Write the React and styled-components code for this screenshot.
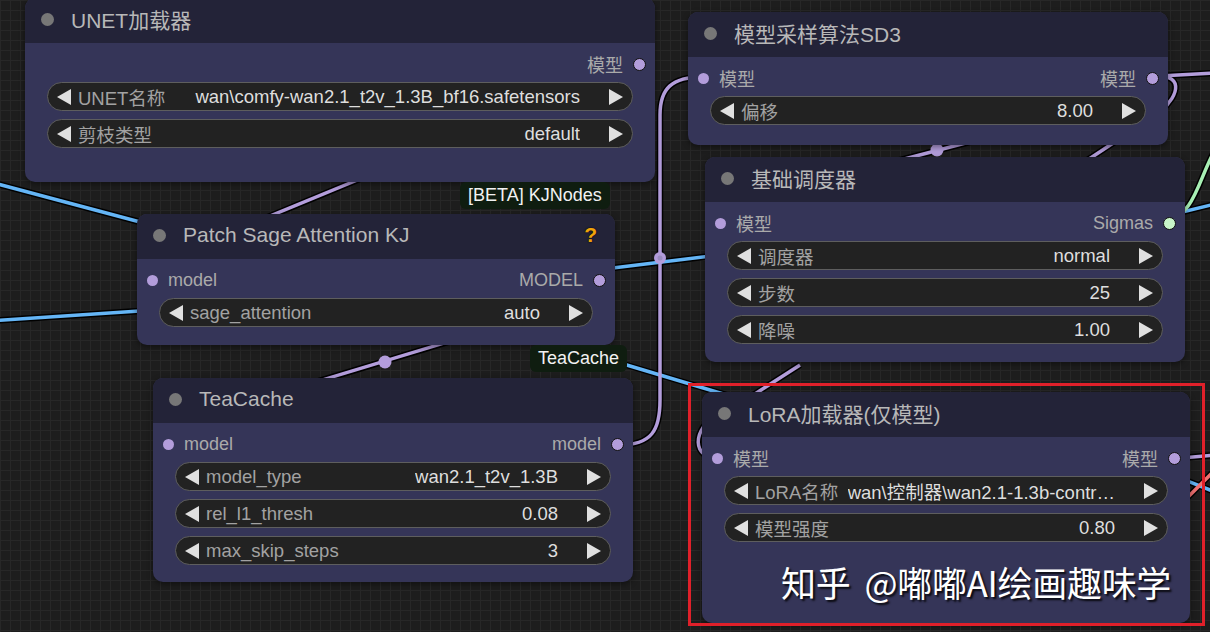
import styled, { createGlobalStyle } from 'styled-components';

const GlobalStyle = createGlobalStyle`
  html, body {
    margin: 0;
    padding: 0;
    background: #1d1d1d;
  }
  * {
    box-sizing: border-box;
  }
`;

const FONT = `"Liberation Sans", Arial, "Noto Sans CJK SC", sans-serif`;

const Canvas = styled.div`
  position: relative;
  width: 1210px;
  height: 632px;
  overflow: hidden;
  font-family: ${FONT};
  background-color: #1d1d1d;
  background-image:
    linear-gradient(#272727 1px, transparent 1px),
    linear-gradient(90deg, #272727 1px, transparent 1px);
  background-size: 10px 10px;
`;

const WireLayer = styled.svg`
  position: absolute;
  inset: 0;
  width: 1210px;
  height: 632px;
`;

const NodeBox = styled.div`
  position: absolute;
  left: ${p => p.$x}px;
  top: ${p => p.$y}px;
  width: ${p => p.$w}px;
  height: ${p => p.$h}px;
  display: flex;
  flex-direction: column;
  border-radius: 10px;
  background: #353558;
  box-shadow: 0 2px 6px rgba(0, 0, 0, 0.45);
`;

const Header = styled.div`
  height: 45px;
  flex: none;
  display: flex;
  align-items: center;
  padding: 0 18px 3px 16px;
  background: #232338;
  border-radius: 10px 10px 0 0;
`;

const TitleDot = styled.span`
  width: 13px;
  height: 13px;
  border-radius: 50%;
  background: #777;
  margin-right: 17px;
  flex: none;
`;

const Title = styled.span`
  color: #b8b8b8;
  font-size: 21px;
  flex: 1;
  white-space: nowrap;
`;

const Help = styled.span`
  color: #f0a30a;
  font-size: 21px;
  font-weight: bold;
  text-shadow: 0 0 2px #000;
`;

const Body = styled.div`
  flex: 1;
  display: flex;
  flex-direction: column;
  padding-top: 8px;
`;

const SlotRow = styled.div`
  height: 26px;
  display: flex;
  align-items: center;
  justify-content: space-between;
  padding: 0 9px 0 10px;
  color: #aaa;
  font-size: 18px;
`;

const Slot = styled.div`
  display: flex;
  align-items: center;
  gap: 10px;
  flex-direction: ${p => (p.$out ? 'row-reverse' : 'row')};
`;

const SlotDot = styled.span`
  width: ${p => (p.$out ? 13 : 11)}px;
  height: ${p => (p.$out ? 13 : 11)}px;
  border-radius: 50%;
  background: ${p => p.$color || '#b39ddb'};
  border: ${p => (p.$out ? '1.5px solid #111' : 'none')};
`;

const Widgets = styled.div`
  display: flex;
  flex-direction: column;
  gap: 8px;
  margin: 5px 22px 0;
`;

const Widget = styled.div`
  height: 29px;
  display: flex;
  align-items: center;
  padding: 0 8px 0 8px;
  background: #222;
  border: 1px solid #5e5e5e;
  border-radius: 15px;
  font-size: 18.5px;
  white-space: nowrap;
`;

const Label = styled.span`
  color: #a2a2a2;
  margin-left: 6px;
  flex: none;
`;

const Value = styled.span`
  color: #dedede;
  margin-left: auto;
  margin-right: 28px;
  overflow: hidden;
`;

const Arrow = ({ right }) => (
  <svg width="16" height="18" viewBox="0 0 16 18" style={{ flex: 'none' }}>
    <polygon points={right ? '1,1 15,9 1,17' : '15,1 1,9 15,17'} fill="#e0e0e0" />
  </svg>
);

const Badge = styled.div`
  position: absolute;
  left: ${p => p.$x}px;
  top: ${p => p.$y}px;
  height: 27px;
  padding: 0 8px;
  display: flex;
  align-items: center;
  background: #0f1d10;
  border-radius: 6px;
  color: #f2f2f2;
  font-size: 18px;
  white-space: nowrap;
`;

const Frame = styled.div`
  position: absolute;
  left: 688px;
  top: 383px;
  width: 517px;
  height: 243px;
  border: 3px solid #e0202a;
  pointer-events: none;
`;

const Watermark = styled.div`
  position: absolute;
  left: 781px;
  top: 556px;
  display: flex;
  gap: 14px;
  color: #fff;
  font-family: "Noto Sans CJK SC", "Liberation Sans", sans-serif;
  font-size: 35px;
  font-weight: 400;
  letter-spacing: -0.3px;
  text-shadow: 2px 2px 2px rgba(0, 0, 0, 0.85);
  white-space: nowrap;
`;

const Node = ({ x, y, w, h, title, help, input, output, outColor, widgets }) => (
  <NodeBox $x={x} $y={y} $w={w} $h={h}>
    <Header>
      <TitleDot />
      <Title>{title}</Title>
      {help && <Help>?</Help>}
    </Header>
    <Body>
      <SlotRow>
        <Slot>{input && <><SlotDot />{input}</>}</Slot>
        <Slot $out>{output && <><SlotDot $out $color={outColor} />{output}</>}</Slot>
      </SlotRow>
      <Widgets>
        {widgets.map(([label, value]) => (
          <Widget key={label}>
            <Arrow />
            <Label>{label}</Label>
            <Value>{value}</Value>
            <Arrow right />
          </Widget>
        ))}
      </Widgets>
    </Body>
  </NodeBox>
);

const BLUE = '#64b5f6';
const PURPLE = '#b39ddb';

const wires = [
  { c: BLUE, d: 'M -10 182 L 200 238' },
  { c: BLUE, d: 'M -10 321 L 200 307' },
  { c: BLUE, d: 'M 580 272 L 760 250' },
  { c: BLUE, d: 'M 1170 215 L 1215 204' },
  { c: BLUE, d: 'M 600 357 L 760 405' },
  { c: BLUE, d: 'M 1180 478 L 1215 492' },
  { c: PURPLE, d: 'M 200 245 L 430 150' },
  { c: PURPLE, d: 'M 240 405 L 520 320' },
  { c: PURPLE, d: 'M 619 445 C 652 445 660 430 660 400 L 660 115 C 660 88 672 77 703 77' },
  { c: PURPLE, d: 'M 1150 77 C 1185 72 1180 95 1160 112 L 1080 165' },
  { c: PURPLE, d: 'M 1160 76 L 1215 73' },
  { c: PURPLE, d: 'M 870 168 L 1000 134' },
  { c: PURPLE, d: 'M 720 459 C 692 459 690 430 720 412' },
  { c: PURPLE, d: 'M 730 410 L 800 365' },
  { c: PURPLE, d: 'M 1170 459 L 1215 455' },
  { c: '#a8f0b4', d: 'M 1165 222 C 1195 215 1198 180 1215 150' },
  { c: '#f07070', d: 'M 1185 500 L 1215 470' },
];

export default function App() {
  return (
    <>
      <GlobalStyle />
      <Canvas>
        <WireLayer>
          {wires.map((w, i) => (
            <path key={'o' + i} d={w.d} fill="none" stroke="#000" strokeWidth="6.5" />
          ))}
          {wires.map((w, i) => (
            <path key={'c' + i} d={w.d} fill="none" stroke={w.c} strokeWidth="3.5" />
          ))}
          <circle cx="660" cy="258" r="6" fill={PURPLE} />
          <circle cx="385" cy="362" r="6.5" fill={PURPLE} />
          <circle cx="937" cy="150" r="6.5" fill={PURPLE} />
          <circle cx="660" cy="258" r="2.5" fill="#9a8cc0" />
        </WireLayer>

        <Node
          x={25} y={-2} w={630} h={184}
          title="UNET加载器"
          output="模型"
          widgets={[
            ['UNET名称', 'wan\\comfy-wan2.1_t2v_1.3B_bf16.safetensors'],
            ['剪枝类型', 'default'],
          ]}
        />
        <Node
          x={688} y={12} w={480} h={133}
          title="模型采样算法SD3"
          input="模型" output="模型"
          widgets={[['偏移', '8.00']]}
        />
        <Node
          x={705} y={157} w={480} h={205}
          title="基础调度器"
          input="模型" output="Sigmas" outColor="#c8f5c8"
          widgets={[
            ['调度器', 'normal'],
            ['步数', '25'],
            ['降噪', '1.00'],
          ]}
        />
        <Node
          x={137} y={214} w={478} h={131}
          title="Patch Sage Attention KJ" help
          input="model" output="MODEL"
          widgets={[['sage_attention', 'auto']]}
        />
        <Node
          x={153} y={378} w={480} h={204}
          title="TeaCache"
          input="model" output="model"
          widgets={[
            ['model_type', 'wan2.1_t2v_1.3B'],
            ['rel_l1_thresh', '0.08'],
            ['max_skip_steps', '3'],
          ]}
        />
        <Node
          x={702} y={392} w={488} h={231}
          title="LoRA加载器(仅模型)"
          input="模型" output="模型"
          widgets={[
            ['LoRA名称', 'wan\\控制器\\wan2.1-1.3b-contr…'],
            ['模型强度', '0.80'],
          ]}
        />

        <Badge $x={460} $y={182}>[BETA] KJNodes</Badge>
        <Badge $x={530} $y={345}>TeaCache</Badge>

        <Watermark>
          <span>知乎</span>
          <span>@嘟嘟AI绘画趣味学</span>
        </Watermark>
        <Frame />
      </Canvas>
    </>
  );
}
